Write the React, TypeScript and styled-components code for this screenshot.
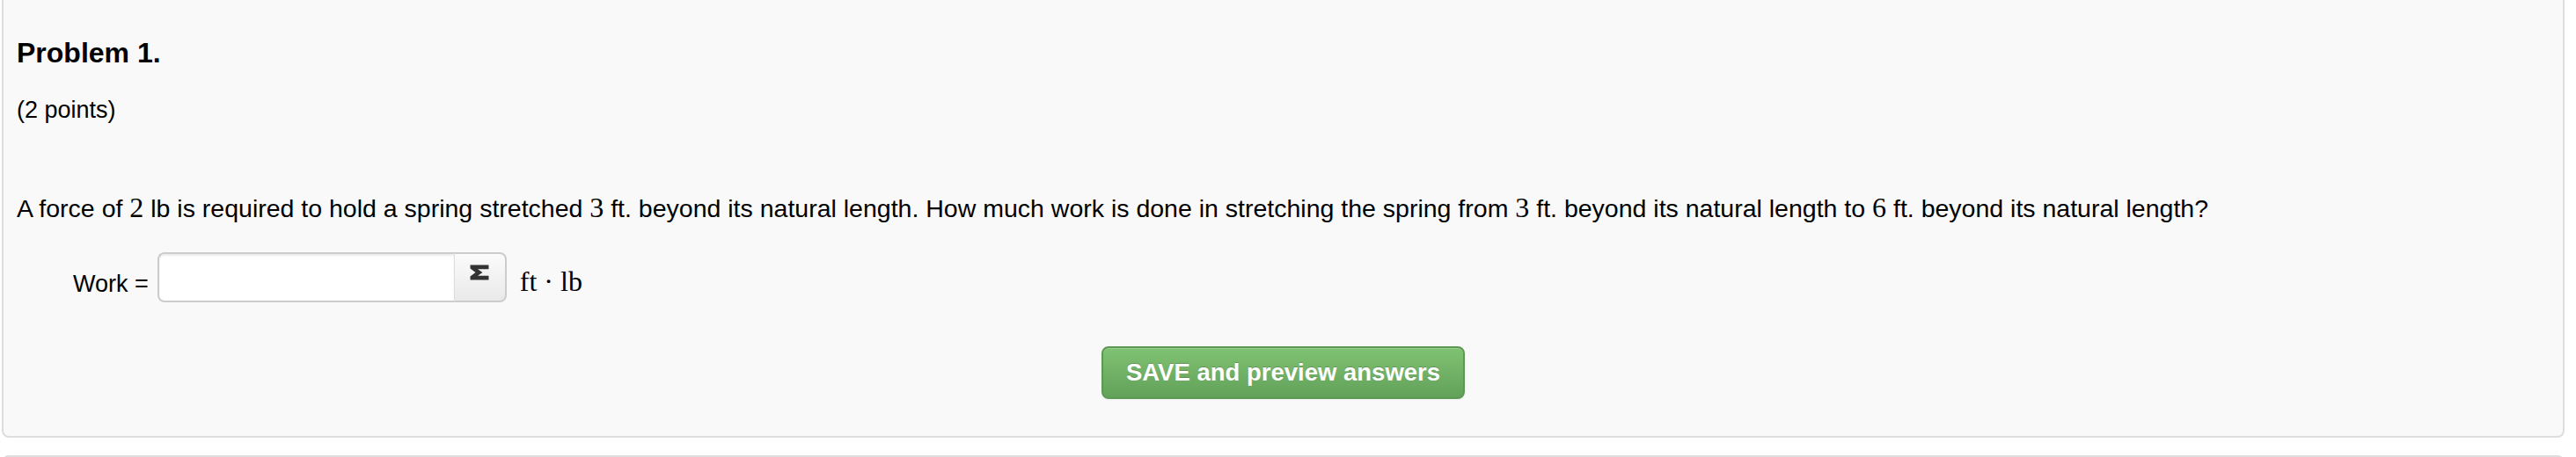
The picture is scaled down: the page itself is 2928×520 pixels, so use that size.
import styled, { createGlobalStyle } from 'styled-components';

const GlobalStyle = createGlobalStyle`
  html, body {
    margin: 0;
    padding: 0;
    background: #ffffff;
  }
  body {
    font-family: "Liberation Sans", Arial, Helvetica, sans-serif;
    color: #000;
  }
`;

const Page = styled.div`
  display: flex;
  flex-direction: column;
  gap: 20px;
  padding: 0 13px 0 2px;
`;

const ProblemCard = styled.section<{ $next?: boolean }>`
  background-color: #f9f9f9;
  border: 2px solid #dddddd;
  border-top: ${props => (props.$next ? '2px solid #dddddd' : 'none')};
  border-bottom: ${props => (props.$next ? 'none' : '2px solid #dddddd')};
  border-radius: ${props => (props.$next ? '8px 8px 0 0' : '0 0 8px 8px')};
  padding: ${props => (props.$next ? '0' : '40px 15px 42px')};
  min-height: ${props => (props.$next ? '20px' : '0')};
`;

const Heading = styled.h3`
  margin: 0;
  font-size: 32px;
  line-height: 40px;
  font-weight: bold;
`;

const Points = styled.div`
  margin-top: 27px;
  font-size: 27px;
  line-height: 36px;
`;

const Statement = styled.p`
  margin: 75px 0 0;
  font-size: 28.5px;
  line-height: 36px;
`;

const MathNum = styled.span`
  font-family: "Liberation Serif", "Times New Roman", serif;
  font-size: 32px;
`;

const AnswerRow = styled.div`
  display: flex;
  align-items: flex-end;
  margin-top: 32px;
  padding-left: 64px;
  font-size: 27px;
`;

const Label = styled.label`
  margin: 0 10px 7px 0;
  line-height: 27px;
`;

const InputGroup = styled.div`
  display: flex;
  height: 57px;
`;

const AnswerInput = styled.input`
  box-sizing: border-box;
  width: 338px;
  height: 57px;
  margin: 0;
  padding: 4px 12px;
  border: 2px solid #cccccc;
  border-right: 1px solid #dddddd;
  border-radius: 8px 0 0 8px;
  background: #ffffff;
  box-shadow: inset 0 2px 2px rgba(0, 0, 0, 0.075);
  font-size: 27px;
  font-family: inherit;
  outline: none;
`;

const EquationButton = styled.button`
  box-sizing: border-box;
  display: flex;
  justify-content: center;
  align-items: flex-start;
  width: 59px;
  height: 57px;
  padding: 12px 0 0;
  border: 2px solid #cccccc;
  border-left: none;
  border-radius: 0 8px 8px 0;
  background: linear-gradient(#fbfbfb, #e9e9e9);
  color: #333333;
  cursor: pointer;
`;

const Units = styled.span`
  margin: 0 0 8px 15px;
  font-family: "Liberation Serif", "Times New Roman", serif;
  font-size: 32px;
  line-height: 32px;
`;

const Actions = styled.div`
  display: flex;
  justify-content: center;
  margin-top: 50px;
`;

const SubmitButton = styled.button`
  box-sizing: border-box;
  width: 413px;
  height: 60px;
  padding: 0;
  border: 2px solid #5c9a53;
  border-radius: 8px;
  background: linear-gradient(#80c273, #62a159);
  color: #ffffff;
  font-family: "Liberation Sans", Arial, sans-serif;
  font-size: 27.5px;
  font-weight: bold;
  text-shadow: 0 -1px 0 rgba(0, 0, 0, 0.2);
  box-shadow: inset 0 1px 0 rgba(255, 255, 255, 0.2), 0 1px 2px rgba(0, 0, 0, 0.05);
  cursor: pointer;
`;

// bold sigma glyph of the equation editor button
const SigmaIcon = () => (
  <svg width="22" height="18" viewBox="0 0 21 17" aria-hidden="true">
    <path
      d="M0.5 0.5 H20.5 V5 H8.6 L13.8 8.5 L8.6 12 H20.5 V16.5 H0.5 V12.8 L6.2 8.5 L0.5 4.2 Z"
      fill="currentColor"
    />
  </svg>
);

const App = (): JSX.Element => {
  return (
    <Page>
      <GlobalStyle />
      <ProblemCard>
        <Heading>Problem 1.</Heading>
        <Points>(2 points)</Points>

        <Statement>
          A force of <MathNum>2</MathNum> lb is required to hold a spring stretched <MathNum>3</MathNum> ft. beyond its
          natural length. How much work is done in stretching the spring from <MathNum>3</MathNum> ft. beyond its
          natural length to <MathNum>6</MathNum> ft. beyond its natural length?
        </Statement>

        <AnswerRow>
          <Label htmlFor="answer-1">Work =</Label>
          <InputGroup>
            <AnswerInput id="answer-1" type="text" />
            <EquationButton type="button" title="Equation editor">
              <SigmaIcon />
            </EquationButton>
          </InputGroup>
          <Units>ft · lb</Units>
        </AnswerRow>

        <Actions>
          <SubmitButton type="button">SAVE and preview answers</SubmitButton>
        </Actions>
      </ProblemCard>
      <ProblemCard $next />
    </Page>
  );
};

export default App;
